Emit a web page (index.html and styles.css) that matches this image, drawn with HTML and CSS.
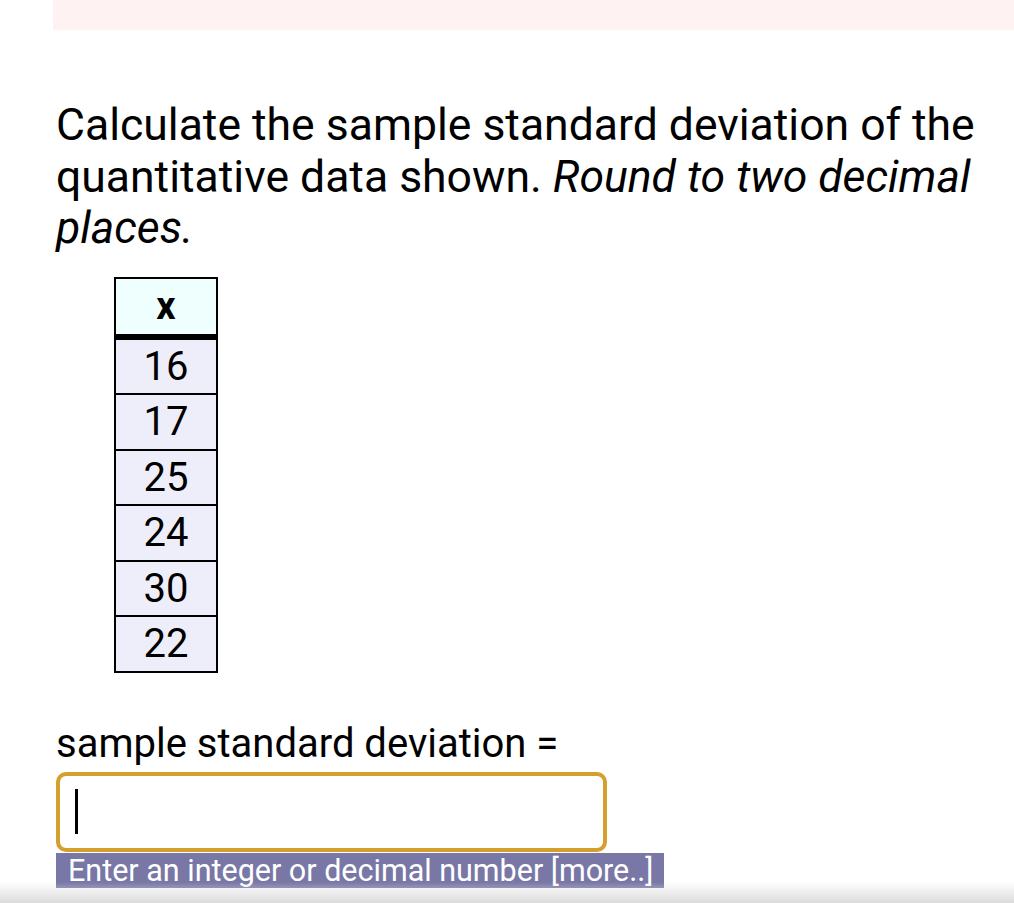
FILE: index.html
```html
<!DOCTYPE html>
<html>
<head>
<meta charset="utf-8">
<link rel="stylesheet" href="styles.css">
</head>
<body>
<div class="page">
  <div class="banner"></div>
  <div class="content">
    <p class="question">Calculate the sample standard deviation of the quantitative data shown. <em>Round to two decimal places.</em></p>
    <table class="data">
      <thead><tr><th>x</th></tr></thead>
      <tbody>
        <tr><td>16</td></tr>
        <tr><td>17</td></tr>
        <tr><td>25</td></tr>
        <tr><td>24</td></tr>
        <tr><td>30</td></tr>
        <tr><td>22</td></tr>
      </tbody>
    </table>
    <div class="label">sample standard deviation =</div>
    <div class="answer"><span class="caret"></span></div>
    <div class="hint">Enter an integer or decimal number [more..]</div>
  </div>
  <div class="shade"></div>
</div>
</body>
</html>
```

FILE: styles.css
```css
html, body {
  margin: 0;
  padding: 0;
  background: #ffffff;
}
body {
  font-family: Roboto, "Liberation Sans", sans-serif;
  color: #000;
  width: 1014px;
  height: 911px;
  overflow: hidden;
}
.page {
  position: relative;
  width: 1014px;
  height: 911px;
}
.banner {
  margin-left: 53px;
  height: 30px;
  background: #fff2f2;
}
.content {
  padding-left: 56px;
}
.question {
  margin: 0;
  padding-top: 70px;
  font-size: 44.5px;
  line-height: 51.5px;
  width: 950px;
}
.question em {
  font-style: italic;
}
.data {
  margin-top: 22px;
  margin-left: 58px;
  border-collapse: collapse;
  font-size: 40px;
}
.data th {
  width: 100px;
  height: 55px;
  background: #effffd;
  border: 2px solid #000;
  border-bottom: 6px solid #000;
  font-weight: bold;
  padding: 0;
  font-size: 38px;
  line-height: 53px;
  text-align: center;
}
.data td {
  height: 53.5px;
  background: #eeeefb;
  border: 2px solid #000;
  padding: 0;
  text-align: center;
  line-height: 53px;
}
.label {
  margin-top: 48px;
  font-size: 40px;
  line-height: 46px;
}
.answer {
  margin-top: 5px;
  width: 543px;
  height: 72px;
  border: 4px solid #d49f2c;
  border-radius: 10px;
  box-sizing: content-box;
  display: flex;
  align-items: center;
}
.caret {
  display: block;
  width: 3px;
  height: 45px;
  background: #000;
  margin-left: 15px;
}
.hint {
  display: inline-block;
  margin-top: 1px;
  background: #7877a6;
  color: #ffffff;
  font-size: 30.5px;
  line-height: 35px;
  padding: 0 11px 0 12px;
}
.shade {
  position: absolute;
  left: 0;
  right: 0;
  top: 882px;
  height: 21px;
  background: linear-gradient(to bottom, rgba(255,255,255,0), #dcdcdc);
}
```
